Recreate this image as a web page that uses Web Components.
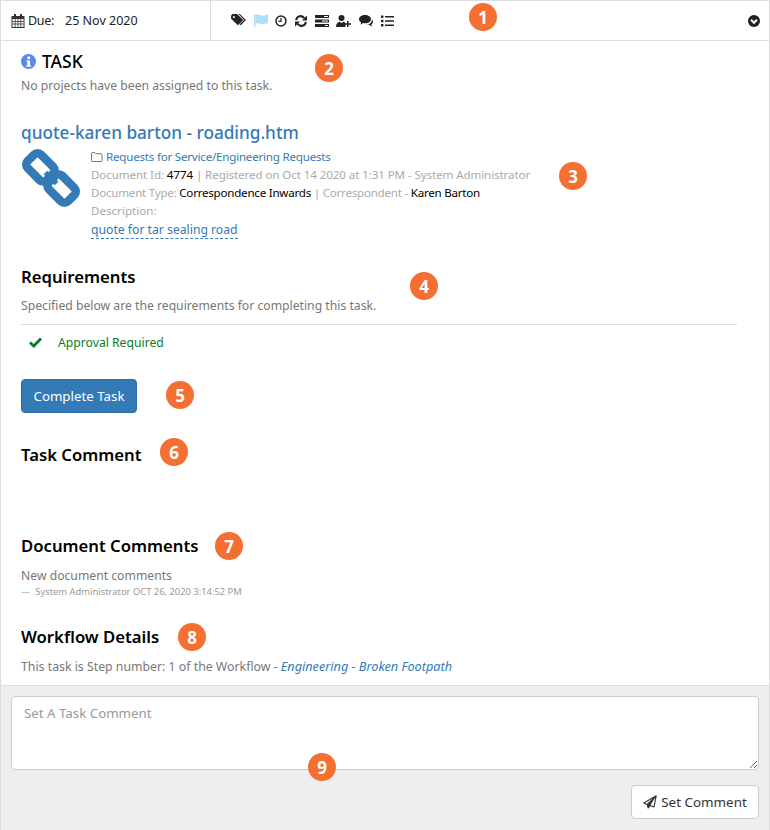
<!DOCTYPE html>
<html>
<head>
<meta charset="utf-8">
<title>Task</title>
<style>
  html, body { margin: 0; padding: 0; background: #fff; }
  body { font-family: "Noto Sans", "Open Sans", sans-serif; font-size: 12.2px; color: #777; }
</style>
</head>
<body>
<task-page>
  <task-toolbar></task-toolbar>
  <task-body></task-body>
  <task-footer></task-footer>
  <note-badge n="1" style="left:468px;top:2px"></note-badge>
  <note-badge n="2" style="left:314px;top:53px"></note-badge>
  <note-badge n="3" style="left:558px;top:161px"></note-badge>
  <note-badge n="4" style="left:409px;top:271px"></note-badge>
  <note-badge n="5" style="left:165px;top:380px"></note-badge>
  <note-badge n="6" style="left:159px;top:437px"></note-badge>
  <note-badge n="7" style="left:214px;top:531px"></note-badge>
  <note-badge n="8" style="left:177px;top:622px"></note-badge>
  <note-badge n="9" style="left:307px;top:752px"></note-badge>
</task-page>

<script>
const icons = {
  calendar: '<svg viewBox="0 0 14 14" width="14" height="14"><path fill="#333" d="M3 0h2v2h4V0h2v2h2.5v12H.5V2H3zM1.500 5v8h11V5z"/><path stroke="#333" stroke-width=".8" d="M1.500 7.500h11M1.500 10h11M4.200 5v8M7 5v8M9.800 5v8"/></svg>',
  tags: '<svg viewBox="0 0 16 14" width="15" height="13"><path fill="#222" d="M0 1.500 1.500 0h5L13 6.500 7.500 12 0 5zM3 2.200a1.100 1.100 0 1 0 .01 0z" fill-rule="evenodd"/><path fill="#222" d="M8 0h1.500L16 6.500 10.500 12 9.300 11l4.700-4.500z"/></svg>',
  flag: '<svg viewBox="0 0 14 13" width="14" height="13"><path fill="#aee0f8" d="M0 0h1.500v13H0z"/><path fill="#aee0f8" d="M1.500 1c3-1.500 5 1 7 .7 2-.2 3.500-.8 5.500-1.200v8.500c-2 .5-3.500 1.200-5.500 1.200-2 .2-4-2-7-.6z"/></svg>',
  clock: '<svg viewBox="0 0 12 12" width="12" height="12"><circle cx="6" cy="6" r="5" fill="none" stroke="#222" stroke-width="1.500"/><path fill="none" stroke="#222" stroke-width="1.200" d="M6 2.800v3.600H3.400"/></svg>',
  refresh: '<svg viewBox="0 0 12 12" width="12" height="12"><path fill="none" stroke="#222" stroke-width="2" d="M1.200 5.200A4.400 4.400 0 0 1 9.300 3.200M10.800 6.800A4.400 4.400 0 0 1 2.700 8.800"/><path fill="#222" d="M12 .5v5H7zM0 11.500v-5h5z"/></svg>',
  server: '<svg viewBox="0 0 14 12" width="14" height="12"><path fill="#222" d="M0 0h14v3H0zM0 4.500h14v3H0zM0 9h14v3H0z"/><path fill="#fff" d="M9 1h4v1H9zM7 5.500h6v1H7zM10 10h3v1h-3z"/></svg>',
  useradd: '<svg viewBox="0 0 15 12" width="15" height="12"><circle cx="5.500" cy="3" r="3" fill="#222"/><path fill="#222" d="M0 12c0-3.500 2-5 3.500-5.200L5.500 8l2-1.200c.8.200 1.500.5 2 1.200v4z"/><path fill="#222" d="M11 6h1.500v2.300H15v1.400h-2.500V12H11V9.700H8.500V8.300H11z"/></svg>',
  comments: '<svg viewBox="0 0 14 12" width="14" height="12"><path fill="#222" d="M6 0c3.300 0 6 1.800 6 4.200S9.300 8.300 6 8.300c-.7 0-1.200 0-1.800-.2L1.500 9.800l.6-2.500C.8 6.500 0 5.400 0 4.200 0 1.800 2.700 0 6 0z"/><path fill="#222" d="M13 4.500c.7.700 1 1.400 1 2.300 0 1-.6 2-1.600 2.600l.5 2.100L10 9.800H7.500C10.500 9.500 13 7.500 13 4.500z"/></svg>',
  list: '<svg viewBox="0 0 13 12" width="13" height="12"><path fill="#222" d="M0 .5h2.400v2.400H0zM0 4.800h2.400v2.400H0zM0 9.100h2.400v2.400H0zM4 .9h9v1.600H4zM4 5.200h9v1.600H4zM4 9.500h9v1.600H4z"/></svg>',
  chevron: '<svg viewBox="0 0 12 12" width="12" height="12"><circle cx="6" cy="6" r="6" fill="#222"/><path fill="none" stroke="#fff" stroke-width="2" d="M3 4.800l3 3 3-3"/></svg>',
  info: '<svg viewBox="0 0 14 14" width="15" height="15"><circle cx="7" cy="7" r="7" fill="#5b87ea"/><circle cx="7.200" cy="3.500" r="1.500" fill="#fff"/><path fill="#fff" d="M5 6h3.500v4.800h1V12H4.800v-1.200h1.100V7.200H5z"/></svg>',
  link: '<svg viewBox="0 0 60 60" width="60" height="60"><g fill="none" stroke="#337ab7" stroke-width="8.500"><rect x="5.900" y="9.900" width="27" height="19" rx="5" transform="rotate(45 19.400 19.400)"/><rect x="27.100" y="31.100" width="27" height="19" rx="5" transform="rotate(45 40.600 40.600)"/></g><path stroke="#337ab7" stroke-width="5" d="M24.400 24.400 35.600 35.600"/></svg>',
  folder: '<svg viewBox="0 0 12 10" width="12" height="10"><path fill="none" stroke="#777" d="M.5 2V1.200C.5.800.8.500 1.200.500h2.600l1 1.200h5.500c.4 0 .7.300.7.700v6.400c0 .4-.3.700-.7.700H1.200c-.4 0-.7-.3-.7-.7z"/></svg>',
  check: '<svg viewBox="0 0 13 11" width="13" height="11"><path fill="none" stroke="#0a7a2a" stroke-width="2.800" d="M1 5.500l3.800 3.500L12 1.500"/></svg>',
  plane: '<svg viewBox="0 0 14 14" width="14" height="14"><path fill="none" stroke="#333" stroke-width="1.100" stroke-linejoin="round" d="M13.200.8.800 8l3.400 1.400zM13.200.8 11 12 7.200 10.400 5.200 13 4.200 9.400z"/><path fill="#333" d="M4.200 9.400 5.200 13l2-2.600L13.200.8z"/></svg>'
};

class TaskPage extends HTMLElement {
  connectedCallback() {
    this.attachShadow({ mode: 'open' });
    this.shadowRoot.innerHTML = `
      <style>
        :host { display: flex; flex-direction: column; position: relative; width: 770px; height: 830px; box-sizing: border-box; border: 1px solid #ddd; border-bottom: 0; overflow: hidden; }
      </style>
      <slot></slot>
    `;
  }
}

class NoteBadge extends HTMLElement {
  connectedCallback() {
    this.attachShadow({ mode: 'open' });
    this.shadowRoot.innerHTML = `
      <style>
        :host { position: absolute; display: flex; align-items: center; justify-content: center; width: 28px; height: 28px; border-radius: 50%; background: #f37032; color: #fff; font: 700 17px "Noto Sans", sans-serif; }
      </style>
      ${this.getAttribute('n')}
    `;
  }
}

class TaskToolbar extends HTMLElement {
  connectedCallback() {
    this.attachShadow({ mode: 'open' });
    this.shadowRoot.innerHTML = `
      <style>
        :host { display: flex; flex: none; height: 39px; margin-top: -1px; border-top: 1px solid #ddd; border-bottom: 1px solid #ddd; color: #222; font-size: 12.5px; }
        .due { display: flex; align-items: center; width: 199px; padding-left: 10px; border-right: 1px solid #ddd; }
        .due span { margin-left: 3px; letter-spacing: -.3px; }
        .due b { font-weight: 400; margin-left: 11px; }
        .tools { flex: 1; display: flex; align-items: center; gap: 7.7px; padding: 0 9px 0 20px; }
        .tools svg { display: block; }
        .tools .end { margin-left: auto; }
      </style>
      <div class="due">${icons.calendar}<span>Due:</span><b>25 Nov 2020</b></div>
      <div class="tools">
        ${icons.tags}${icons.flag}${icons.clock}${icons.refresh}${icons.server}${icons.useradd}${icons.comments}${icons.list}
        <div class="end">${icons.chevron}</div>
      </div>
    `;
  }
}

class TaskBody extends HTMLElement {
  connectedCallback() {
    this.attachShadow({ mode: 'open' });
    this.shadowRoot.innerHTML = `
      <style>
        :host { display: block; flex: 1; min-height: 0; padding: 0 32px 0 20px; overflow: hidden; }
        h2, h3, p { margin: 0; font-weight: 400; }
        .head { display: flex; align-items: center; gap: 6px; margin-top: 9px; height: 22px; font-size: 17.500px; font-weight: 500; color: #000; }
        .muted { line-height: 18px; }
        h3 { font-size: 16.700px; font-weight: 600; color: #000; line-height: 24px; }
        .doc-title { margin-top: 26px; font-size: 17.200px; font-weight: 500; color: #337ab7; line-height: 24px; }
        .doc { display: flex; margin-top: 3px; }
        .doc-icon { width: 70px; flex: none; }
        .doc-icon svg { display: block; }
        .meta { font-size: 11.600px; line-height: 18px; color: #aaa; }
        .meta i { font-style: normal; color: #000; }
        .folder { color: #337ab7; display: flex; align-items: center; gap: 3px; letter-spacing: -.22px; }
        .desc { display: inline-block; margin-top: 2px; font-size: 12.200px; color: #337ab7; border-bottom: 1px dashed #337ab7; line-height: 16px; }
        hr { border: 0; border-top: 1px solid #ddd; margin: 9px 0 0; }
        .req { display: flex; align-items: center; gap: 16px; padding-left: 8px; height: 35px; color: #0a7a2a; }
        button { display: block; width: 116px; height: 34px; margin-top: 19px; padding: 0; border: 1px solid #2e6da4; border-radius: 4px; background: #337ab7; color: #fff; font: inherit; font-size: 13.300px; }
        .wf { font-size: 12.300px; }
        .wf a { font-style: italic; font-size: 12.700px; color: #337ab7; }
        .small { font-size: 9.400px; line-height: 14px; color: #999; }
      </style>
      <div class="head">${icons.info}<span>TASK</span></div>
      <p class="muted" style="margin-top:5px">No projects have been assigned to this task.</p>

      <div class="doc-title">quote-karen barton - roading.htm</div>
      <div class="doc">
        <div class="doc-icon">${icons.link}</div>
        <div class="meta">
          <div class="folder">${icons.folder}<span>Requests for Service/Engineering Requests</span></div>
          <div style="letter-spacing:-.1px">Document Id: <i>4774</i> | Registered on Oct 14 2020 at 1:31 PM - System Administrator</div>
          <div style="letter-spacing:-.24px">Document Type: <i>Correspondence Inwards</i> | Correspondent - <i>Karen Barton</i></div>
          <div>Description:</div>
          <span class="desc">quote for tar sealing road</span>
        </div>
      </div>

      <h3 style="margin-top:26px">Requirements</h3>
      <p class="muted" style="margin-top:8px">Specified below are the requirements for completing this task.</p>
      <hr>
      <div class="req">${icons.check}<span>Approval Required</span></div>
      <button>Complete Task</button>

      <h3 style="margin-top:30px">Task Comment</h3>

      <h3 style="margin-top:67px">Document Comments</h3>
      <p class="muted" style="margin-top:9px">New document comments</p>
      <div class="small">&mdash;&nbsp; System Administrator OCT 26, 2020 3:14:52 PM</div>

      <h3 style="margin-top:26px">Workflow Details</h3>
      <p class="muted wf" style="margin-top:8px">This task is Step number: 1 of the Workflow - <a>Engineering - Broken Footpath</a></p>
    `;
  }
}

class TaskFooter extends HTMLElement {
  connectedCallback() {
    this.attachShadow({ mode: 'open' });
    this.shadowRoot.innerHTML = `
      <style>
        :host { display: flex; flex-direction: column; flex: none; height: 145px; box-sizing: border-box; padding: 10px 10px 0; background: #eee; border-top: 1px solid #ddd; }
        textarea { display: block; width: 100%; height: 74px; box-sizing: border-box; padding: 7px 12px 8px 12px; border: 1px solid #ccc; border-radius: 4px; background: #fff; font: inherit; font-size: 13.300px; color: #999; }
        textarea::placeholder { color: #999; opacity: 1; }
        .bar { display: flex; justify-content: flex-end; margin-top: 15px; }
        button { display: flex; align-items: center; justify-content: center; gap: 4px; width: 128px; height: 34px; padding: 0; border: 1px solid #ccc; border-radius: 4px; background: #fff; color: #333; font: inherit; font-size: 13.400px; }
      </style>
      <textarea placeholder="Set A Task Comment"></textarea>
      <div class="bar"><button>${icons.plane}Set Comment</button></div>
    `;
  }
}

customElements.define('task-page', TaskPage);
customElements.define('note-badge', NoteBadge);
customElements.define('task-toolbar', TaskToolbar);
customElements.define('task-body', TaskBody);
customElements.define('task-footer', TaskFooter);
</script>
</body>
</html>
